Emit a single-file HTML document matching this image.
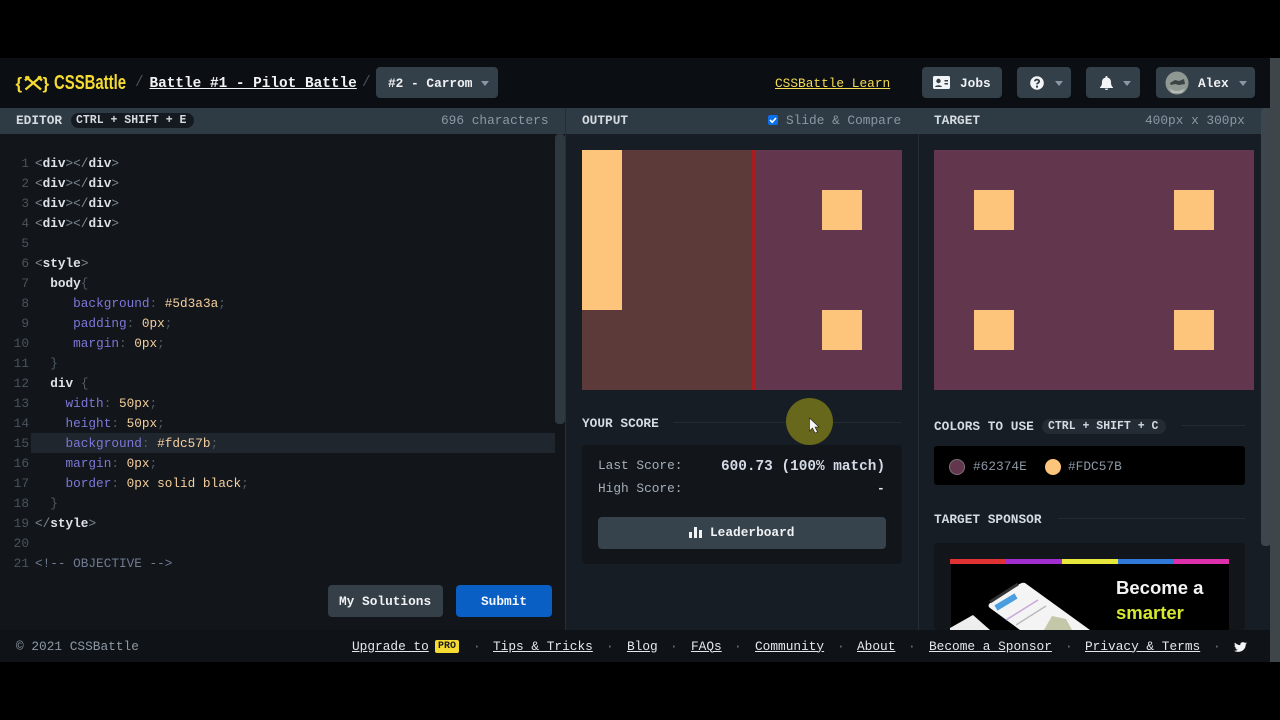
<!DOCTYPE html>
<html><head><meta charset="utf-8"><style>
html,body{margin:0;padding:0;width:1280px;height:720px;overflow:hidden;background:#000}
body{position:relative;font-family:"Liberation Mono",monospace;font-size:12.8px;color:#fff}
div,a,svg{position:absolute}
.t{white-space:pre;line-height:20px;height:20px}
.b{font-weight:bold}
.u{text-decoration:underline;color:#e4e8ec}
.btn{background:#333f49;border-radius:4px;top:67px;height:31px}
.car{width:0;height:0;border-left:4.5px solid transparent;border-right:4.5px solid transparent;border-top:5.5px solid #8b98a3}
.ln{color:#49535c;text-align:right;width:24px;left:5px;margin-top:1px}
.c{left:35px;color:#7c8791;font-size:12.72px;margin-top:1px}
.c b{color:#dfe2e6;font-weight:bold}
.c i{font-style:normal;color:#7d78d8}
.c em{font-style:normal;color:#f5cf9f}
.c s{text-decoration:none;color:#4f5a63}
.sq{background:#fdc57b;width:40px;height:40px}
.dot{color:#69747e}
</style></head><body>
<div style="left:0;top:58px;width:1280px;height:50px;background:#0b0e13"></div>
<div style="left:0;top:108px;width:1280px;height:26px;background:#2e3a44"></div>
<div style="left:0;top:134px;width:565px;height:496px;background:#12161b"></div>
<div style="left:565px;top:134px;width:353px;height:496px;background:#171d24"></div>
<div style="left:918px;top:134px;width:352px;height:496px;background:#171d24"></div>
<div style="left:565px;top:108px;width:1px;height:522px;background:#262e36"></div>
<div style="left:918px;top:134px;width:1px;height:496px;background:#262e36"></div>
<div style="left:0;top:630px;width:1280px;height:32px;background:#0f1318"></div>

<svg style="left:15px;top:72px" width="36" height="22" viewBox="0 0 36 22">
<text x="0.500" y="17" font-family="Liberation Sans" font-weight="bold" font-size="17" fill="#f6dc32">{</text>
<text x="27.500" y="17" font-family="Liberation Sans" font-weight="bold" font-size="17" fill="#f6dc32">}</text>
<path d="M10.500 4.500L26 17.500M26 4.500L10.500 17.500M10 8.500L14 4.500M27 8.500L23 4.500" stroke="#f6dc32" stroke-width="2.300" fill="none"/>
</svg>
<div class="t b" style="left:54px;top:73px;font-family:'Liberation Sans',sans-serif;font-size:20px;color:#f6dc32;transform:scaleX(.745);transform-origin:0 50%">CSSBattle</div>
<div class="t" style="left:135px;top:73px;color:#48525a;font-size:14.4px">/</div>
<div class="t b u" style="left:149.500px;top:73.500px;font-size:14.4px;color:#f0f2f4">Battle #1 - Pilot Battle</div>
<div class="t" style="left:362px;top:73px;color:#48525a;font-size:14.4px">/</div>
<div class="btn" style="left:376px;width:122px"></div>
<div class="t b" style="left:388px;top:74px;color:#f0f2f4">#2 - Carrom</div>
<div class="car" style="left:481px;top:80.500px"></div>

<div class="t u" style="left:775px;top:74px;color:#f6dc55">CSSBattle Learn</div>
<div class="btn" style="left:922px;width:80px"></div>
<svg style="left:933px;top:76px" width="17" height="13" viewBox="0 0 17 13"><rect width="17" height="13" rx="1.5" fill="#f2f4f5"/><circle cx="5.5" cy="5" r="2.2" fill="#333f49"/><path d="M2 11c.4-2.4 6.6-2.4 7 0z" fill="#333f49"/><rect x="11.5" y="4" width="3.5" height="1.5" fill="#333f49"/><rect x="11.5" y="7" width="3.5" height="1.5" fill="#333f49"/></svg>
<div class="t b" style="left:960px;top:74px;color:#f0f2f4">Jobs</div>
<div class="btn" style="left:1017px;width:54px"></div>
<svg style="left:1030px;top:76px" width="14" height="14" viewBox="0 0 14 14"><circle cx="7" cy="7" r="6.8" fill="#f4f5f6"/><path d="M4.8 5.3C5 3 9.2 3 9.2 5.4 9.2 7 7 7 7 8.4" stroke="#333f49" stroke-width="1.8" fill="none"/><rect x="6" y="9.6" width="2" height="2" fill="#333f49"/></svg>
<div class="car" style="left:1055px;top:80.500px"></div>
<div class="btn" style="left:1086px;width:54px"></div>
<svg style="left:1100px;top:76px" width="13" height="14" viewBox="0 0 13 14"><path d="M6.500 0c.6 0 1 .4 1 1v.6C9.600 2 11 3.600 11 6c0 3.400 1 4.400 2 5.400V12H0v-.6C1 10.400 2 9.400 2 6c0-2.400 1.400-4 3.500-4.400V1c0-.6.400-1 1-1zM4.800 12.600h3.400c0 .8-.8 1.400-1.700 1.400s-1.700-.6-1.700-1.400z" fill="#f4f5f6"/></svg>
<div class="car" style="left:1123px;top:80.500px"></div>
<div class="btn" style="left:1156px;width:99px"></div>
<svg style="left:1165px;top:71px" width="24" height="24" viewBox="0 0 24 24"><circle cx="12" cy="12" r="11.500" fill="#8f9892"/><path d="M5 12l5-3 4 1 5-2 1 5-6 1-4-1-4 1z" fill="#3d4244"/><path d="M4 17c5 4 11 4 16 0l-3 5H7z" fill="#b5bbb6"/></svg>
<div class="t b" style="left:1198px;top:74px;color:#f0f2f4">Alex</div>
<div class="car" style="left:1239px;top:80.500px"></div>

<div class="t b" style="left:16px;top:110.500px;color:#d5dbe0">EDITOR</div>
<div style="left:71px;top:113px;width:123px;height:15px;border-radius:8px;background:#141a20"></div>
<div class="t b" style="left:76px;top:110.500px;font-size:11.500px;color:#d5dbe0">CTRL + SHIFT + E</div>
<div class="t" style="left:441px;top:110.500px;color:#8c98a3">696 characters</div>
<div class="t b" style="left:582px;top:110.500px;color:#d5dbe0">OUTPUT</div>
<div style="left:768px;top:115px;width:10px;height:10px;background:#0a6fe8;border-radius:2px"></div>
<svg style="left:768px;top:115px" width="10" height="10" viewBox="0 0 10 10"><path d="M2 5l2.200 2.200L8 3" stroke="#fff" stroke-width="1.600" fill="none"/></svg>
<div class="t" style="left:786px;top:110.500px;color:#8c98a3">Slide &amp; Compare</div>
<div class="t b" style="left:934px;top:110.500px;color:#d5dbe0">TARGET</div>
<div class="t" style="left:1145px;top:110.500px;color:#8c98a3">400px x 300px</div>

<div style="left:31px;top:433px;width:524px;height:20px;background:#20262d"></div>
<div style="left:555px;top:134px;width:10px;height:290px;background:#2e3840;border-radius:4px"></div>

<div class="t ln" style="top:153px">1</div><div class="t c" style="top:153px">&lt;<b>div</b>&gt;&lt;/<b>div</b>&gt;</div>
<div class="t ln" style="top:173px">2</div><div class="t c" style="top:173px">&lt;<b>div</b>&gt;&lt;/<b>div</b>&gt;</div>
<div class="t ln" style="top:193px">3</div><div class="t c" style="top:193px">&lt;<b>div</b>&gt;&lt;/<b>div</b>&gt;</div>
<div class="t ln" style="top:213px">4</div><div class="t c" style="top:213px">&lt;<b>div</b>&gt;&lt;/<b>div</b>&gt;</div>
<div class="t ln" style="top:233px">5</div>
<div class="t ln" style="top:253px">6</div><div class="t c" style="top:253px">&lt;<b>style</b>&gt;</div>
<div class="t ln" style="top:273px">7</div><div class="t c" style="top:273px">  <b>body</b><s>{</s></div>
<div class="t ln" style="top:293px">8</div><div class="t c" style="top:293px">     <i>background</i><s>:</s> <em>#5d3a3a</em><s>;</s></div>
<div class="t ln" style="top:313px">9</div><div class="t c" style="top:313px">     <i>padding</i><s>:</s> <em>0px</em><s>;</s></div>
<div class="t ln" style="top:333px">10</div><div class="t c" style="top:333px">     <i>margin</i><s>:</s> <em>0px</em><s>;</s></div>
<div class="t ln" style="top:353px">11</div><div class="t c" style="top:353px">  <s>}</s></div>
<div class="t ln" style="top:373px">12</div><div class="t c" style="top:373px">  <b>div</b> <s>{</s></div>
<div class="t ln" style="top:393px">13</div><div class="t c" style="top:393px">    <i>width</i><s>:</s> <em>50px</em><s>;</s></div>
<div class="t ln" style="top:413px">14</div><div class="t c" style="top:413px">    <i>height</i><s>:</s> <em>50px</em><s>;</s></div>
<div class="t ln" style="top:433px">15</div><div class="t c" style="top:433px">    <i>background</i><s>:</s> <em>#fdc57b</em><s>;</s></div>
<div class="t ln" style="top:453px">16</div><div class="t c" style="top:453px">    <i>margin</i><s>:</s> <em>0px</em><s>;</s></div>
<div class="t ln" style="top:473px">17</div><div class="t c" style="top:473px">    <i>border</i><s>:</s> <em>0px solid black</em><s>;</s></div>
<div class="t ln" style="top:493px">18</div><div class="t c" style="top:493px">  <s>}</s></div>
<div class="t ln" style="top:513px">19</div><div class="t c" style="top:513px">&lt;/<b>style</b>&gt;</div>
<div class="t ln" style="top:533px">20</div>
<div class="t ln" style="top:553px">21</div><div class="t c" style="top:553px;color:#707b90">&lt;!-- OBJECTIVE --&gt;</div>

<div style="left:328px;top:585px;width:115px;height:32px;background:#343f48;border-radius:4px"></div>
<div class="t b" style="left:339px;top:591px;color:#f0f2f4;margin-top:.5px">My Solutions</div>
<div style="left:456px;top:585px;width:96px;height:32px;background:#0a5fc4;border-radius:4px"></div>
<div class="t b" style="left:481px;top:591px;color:#f4f7fb;margin-top:.5px">Submit</div>

<div style="left:582px;top:150px;width:320px;height:240px;background:#62374e"></div>
<div style="left:582px;top:150px;width:171px;height:240px;background:#5d3a3a"></div>
<div style="left:752px;top:150px;width:3px;height:240px;background:#a81c20"></div>
<div style="left:582px;top:150px;width:40px;height:160px;background:#fdc57b"></div>
<div class="sq" style="left:822px;top:190px"></div>
<div class="sq" style="left:822px;top:310px"></div>

<div style="left:934px;top:150px;width:320px;height:240px;background:#62374e"></div>
<div class="sq" style="left:974px;top:190px"></div>
<div class="sq" style="left:1174px;top:190px"></div>
<div class="sq" style="left:974px;top:310px"></div>
<div class="sq" style="left:1174px;top:310px"></div>

<div class="t b" style="left:582px;top:413.500px;color:#d5dbe0">YOUR SCORE</div>
<div style="left:673px;top:422px;width:228px;height:1px;background:#232a32"></div>
<div style="left:582px;top:445px;width:320px;height:119px;background:#12161b;border-radius:4px"></div>
<div class="t" style="left:598px;top:456px;color:#a4afb9">Last Score:</div>
<div class="t" style="left:598px;top:478.500px;color:#a4afb9">High Score:</div>
<div class="t b" style="left:721px;top:456.500px;font-size:14.400px;color:#d5dbe6">600.73 (100% match)</div>
<div class="t b" style="left:877px;top:479px;color:#e4e8ec">-</div>
<div style="left:598px;top:517px;width:288px;height:32px;background:#36424c;border-radius:4px"></div>
<svg style="left:689px;top:527px" width="13" height="11" viewBox="0 0 13 11"><rect y="5" width="3" height="6" fill="#f0f2f4"/><rect x="5" width="3" height="11" fill="#f0f2f4"/><rect x="10" y="3" width="3" height="8" fill="#f0f2f4"/></svg>
<div class="t b" style="left:710px;top:523px;color:#f0f2f4">Leaderboard</div>

<div style="left:786px;top:398px;width:47px;height:47px;border-radius:50%;background:#67681b"></div>
<svg style="left:808px;top:417px" width="12" height="18" viewBox="0 0 12 18"><path d="M1.500 1v13l3-3 2.500 5 2.500-1-2.500-5h4z" fill="#f6f6f6" stroke="#222" stroke-width=".6"/></svg>

<div class="t b" style="left:934px;top:416.500px;color:#d5dbe0">COLORS TO USE</div>
<div style="left:1042px;top:419px;width:124px;height:15px;border-radius:8px;background:#232c34"></div>
<div class="t b" style="left:1048px;top:416.500px;font-size:11.500px;color:#d5dbe0">CTRL + SHIFT + C</div>
<div style="left:1181px;top:425px;width:64px;height:1px;background:#232a32"></div>
<div style="left:934px;top:446px;width:311px;height:39px;background:#000;border-radius:3px"></div>
<div style="left:949px;top:459px;width:14px;height:14px;border-radius:50%;background:#62374e;border:1px solid #7c7078"></div>
<div class="t" style="left:973px;top:456.500px;color:#8c98a6">#62374E</div>
<div style="left:1045px;top:459px;width:16px;height:16px;border-radius:50%;background:#fdc57b"></div>
<div class="t" style="left:1068px;top:456.500px;color:#8c98a6">#FDC57B</div>
<div class="t b" style="left:934px;top:509.500px;color:#d5dbe0">TARGET SPONSOR</div>
<div style="left:1058px;top:518px;width:187px;height:1px;background:#232a32"></div>
<div style="left:934px;top:543px;width:311px;height:87px;background:#12161b;border-radius:4px"></div>
<div style="left:951px;top:559px;width:278px;height:71px;background:#000"></div>
<div style="left:950px;top:559px;width:56px;height:4.500px;background:#e03232"></div>
<div style="left:1006px;top:559px;width:56px;height:4.500px;background:#a32ed0"></div>
<div style="left:1062px;top:559px;width:56px;height:4.500px;background:#e6e63c"></div>
<div style="left:1118px;top:559px;width:56px;height:4.500px;background:#3079d8"></div>
<div style="left:1174px;top:559px;width:55px;height:4.500px;background:#df30ac"></div>
<svg style="left:950px;top:575px" width="160" height="55" viewBox="0 0 160 55">
<path d="M75 8Q72 7 68 10L40 28Q37 31 40 33L70 55H140z" fill="#f4f4f4"/>
<path d="M40 27L68 9" stroke="#333" stroke-width="3"/>
<path d="M46 33L66 21" stroke="#4a9ee0" stroke-width="6"/>
<path d="M56 45L88 25" stroke="#c8a8d8" stroke-width="1.500"/>
<path d="M66 50L96 31" stroke="#bbb" stroke-width="1.500"/>
<path d="M94 55l8-14 14 3 6 11z" fill="#c5c8a8"/>
<path d="M23 40L0 53v2h40z" fill="#eeeeee"/>
</svg>
<div class="t b" style="left:1116px;top:578px;font-family:'Liberation Sans',sans-serif;font-size:18.500px;color:#f4f4f4">Become a</div>
<div class="t b" style="left:1116px;top:603px;font-family:'Liberation Sans',sans-serif;font-size:18.500px;color:#d6e832">smarter</div>
<div style="left:0;top:630px;width:1270px;height:32px;background:#0f1318"></div>

<div class="t" style="left:16px;top:636.500px;color:#8c98a3">© 2021 CSSBattle</div>
<div class="t u" style="left:352px;top:636.500px">Upgrade to</div>
<div class="t b" style="left:435px;top:640px;width:24px;height:13px;line-height:13px;background:#f6dc32;color:#1a1a1a;font-size:10px;text-align:center;border-radius:2px">PRO</div>
<div class="t dot" style="left:473px;top:636.500px">·</div>
<div class="t u" style="left:493px;top:636.500px">Tips &amp; Tricks</div>
<div class="t dot" style="left:606px;top:636.500px">·</div>
<div class="t u" style="left:627px;top:636.500px">Blog</div>
<div class="t dot" style="left:670px;top:636.500px">·</div>
<div class="t u" style="left:691px;top:636.500px">FAQs</div>
<div class="t dot" style="left:734px;top:636.500px">·</div>
<div class="t u" style="left:755px;top:636.500px">Community</div>
<div class="t dot" style="left:837px;top:636.500px">·</div>
<div class="t u" style="left:857px;top:636.500px">About</div>
<div class="t dot" style="left:908px;top:636.500px">·</div>
<div class="t u" style="left:929px;top:636.500px">Become a Sponsor</div>
<div class="t dot" style="left:1065px;top:636.500px">·</div>
<div class="t u" style="left:1085px;top:636.500px">Privacy &amp; Terms</div>
<div class="t dot" style="left:1213px;top:636.500px">·</div>
<svg style="left:1234px;top:641px" width="13" height="12" viewBox="0 0 24 24" preserveAspectRatio="none"><path d="M23.950 4.570a10 10 0 0 1-2.820.77 4.960 4.960 0 0 0 2.160-2.720c-.95.550-2 .96-3.130 1.190a4.920 4.920 0 0 0-8.380 4.480C7.690 8.100 4.070 6.130 1.640 3.160a4.820 4.820 0 0 0-.67 2.480c0 1.710.87 3.210 2.190 4.100a4.900 4.900 0 0 1-2.230-.62v.060a4.920 4.920 0 0 0 3.950 4.830 5 5 0 0 1-2.210.08 4.940 4.940 0 0 0 4.600 3.420A9.870 9.870 0 0 1 0 19.540a13.940 13.940 0 0 0 7.550 2.210c9.050 0 14-7.500 14-13.980 0-.21 0-.42-.02-.63a9.940 9.940 0 0 0 2.460-2.550z" fill="#f4f5f6"/></svg>

<div style="left:1261px;top:108px;width:10px;height:438px;background:#3d464c;border-radius:4px"></div>
<div style="left:1270px;top:58px;width:10px;height:604px;background:#3f4649"></div>
<div style="left:0;top:662px;width:1280px;height:58px;background:#000"></div>
</body></html>
